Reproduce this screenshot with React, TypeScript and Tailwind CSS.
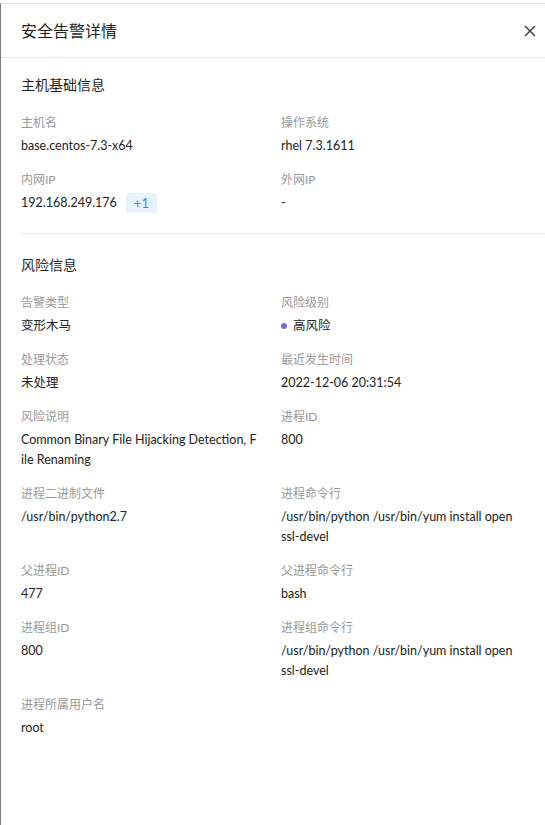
import React from "react";

type Item = { label: string; value: React.ReactNode };

const Field = ({ label, value }: Item) => (
  <div className="pr-[23.5px]">
    <div className="text-[12px] leading-[20px] text-[#999]">{label}</div>
    <div className="mt-[3px] text-[12.5px] leading-[20px] text-[#222] break-all">{value}</div>
  </div>
);

export default function App() {
  const hostItems: Item[] = [
    { label: "主机名", value: "base.centos-7.3-x64" },
    { label: "操作系统", value: "rhel 7.3.1611" },
    {
      label: "内网IP",
      value: (
        <span className="flex items-center">
          <span>192.168.249.176</span>
          <span className="ml-[9px] inline-flex h-[20px] items-center rounded-[2px] bg-[#e8f3ff] px-[8px] text-[13px] text-[#4c7dfc]">
            +1
          </span>
        </span>
      ),
    },
    { label: "外网IP", value: "-" },
  ];
  const riskItems: Item[] = [
    { label: "告警类型", value: "变形木马" },
    {
      label: "风险级别",
      value: (
        <span className="flex items-center">
          <span className="mr-[6px] h-[6px] w-[6px] rounded-full bg-[#7b67d0]" />
          高风险
        </span>
      ),
    },
    { label: "处理状态", value: "未处理" },
    { label: "最近发生时间", value: "2022-12-06 20:31:54" },
    { label: "风险说明", value: "Common Binary File Hijacking Detection, File Renaming" },
    { label: "进程ID", value: "800" },
    { label: "进程二进制文件", value: "/usr/bin/python2.7" },
    { label: "进程命令行", value: "/usr/bin/python /usr/bin/yum install openssl-devel" },
    { label: "父进程ID", value: "477" },
    { label: "父进程命令行", value: "bash" },
    { label: "进程组ID", value: "800" },
    { label: "进程组命令行", value: "/usr/bin/python /usr/bin/yum install openssl-devel" },
    { label: "进程所属用户名", value: "root" },
  ];

  return (
    <div
      className="h-[825px] w-[545px] overflow-hidden bg-white"
      style={{ fontFamily: 'Lato, "Noto Sans CJK SC", sans-serif' }}
    >
      <div className="mt-[3px] h-[822px] border-l border-t border-l-[#7a7a7a] border-t-[#e3e3e3]">
        <div className="flex h-[54px] items-center justify-between border-b border-[#e6e6e6] pl-[20px] pr-[8px]">
          <div className="text-[16px] leading-[24px] text-[#1f1f1f]">安全告警详情</div>
          <svg width="12" height="12" viewBox="0 0 12 12" className="mr-[1px]">
            <path d="M1 1L11 11M11 1L1 11" stroke="#333" strokeWidth="1.4" />
          </svg>
        </div>
        <div className="pl-[20px]">
          <div className="pt-[16px] text-[14px] leading-[22px] text-[#1f1f1f]">主机基础信息</div>
          <div className="mt-[17px] grid grid-cols-[260px_260px] gap-y-[14px]">
            {hostItems.map((it) => (
              <Field key={it.label} {...it} />
            ))}
          </div>
          <div className="mt-[20px] h-px bg-[#e8e8e8]" />
          <div className="pt-[20px] text-[14px] leading-[22px] text-[#1f1f1f]">风险信息</div>
          <div className="mt-[17px] grid grid-cols-[260px_260px] gap-y-[14px]">
            {riskItems.map((it) => (
              <Field key={it.label} {...it} />
            ))}
          </div>
        </div>
      </div>
    </div>
  );
}
